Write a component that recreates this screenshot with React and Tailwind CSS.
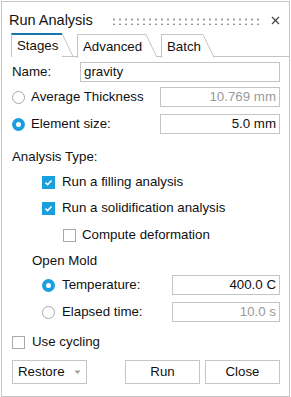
import React from "react";

const Radio = ({ on }) =>
  on ? (
    <span className="w-[13px] h-[13px] rounded-full bg-[#1a9fde] flex items-center justify-center shrink-0">
      <span className="w-[5px] h-[5px] rounded-full bg-white" />
    </span>
  ) : (
    <span className="w-[13px] h-[13px] rounded-full border border-[#a8a8a8] bg-white shrink-0" />
  );

const Check = ({ on }) =>
  on ? (
    <span className="w-[13px] h-[13px] bg-[#1a9fde] flex items-center justify-center shrink-0">
      <svg width="9" height="9" viewBox="0 0 9 9">
        <path d="M1.5 4.6 L3.6 6.6 L7.5 2.4" fill="none" stroke="white" strokeWidth="1.5" />
      </svg>
    </span>
  ) : (
    <span className="w-[13px] h-[13px] border border-[#a8a8a8] bg-white shrink-0" />
  );

const Field = ({ w, value, muted, left }) => (
  <div
    className={`h-[20px] border border-[#c4c4c4] bg-white flex items-center px-[3px] ${w} ${
      left ? "justify-start" : "justify-end"
    } ${muted ? "text-[#9a9a9a]" : "text-[#111]"}`}
  >
    {value}
  </div>
);

const Tab = ({ label, w, active }) => (
  <div className={`flex h-[24px] ${active ? "relative z-10" : ""}`}>
    <div
      className={`h-full pl-[5px] flex items-center bg-white ${w} ${
        active ? "border-l border-[#c4c4c4] border-t-2 border-t-[#1478a8]" : "border-l border-t border-[#c4c4c4] mt-px"
      }`}
    >
      {label}
    </div>
    <svg width="11" height="24" viewBox="0 0 11 24" className={active ? "" : "mt-px"}>
      <polygon points="0,0 11,23 0,23" fill="white" />
      <line x1="0" y1="0.5" x2="11" y2="23.5" stroke="#c4c4c4" strokeWidth="1" />
    </svg>
  </div>
);

export default function App() {
  return (
    <div className="w-[291px] h-[397px] bg-white pt-px pl-px font-['Liberation_Sans',Arial,sans-serif] text-[13.3px] text-[#111] leading-none">
      <div className="w-[289px] h-[396px] border border-[#c6c6c6] flex flex-col">
        <div className="h-[31px] pt-[6px] pl-[7px] pr-[9px] flex items-center">
          <span className="text-[14.5px]">Run Analysis</span>
          <div className="ml-[18px] w-[152px] h-[8px] bg-[radial-gradient(circle,#9a9a9a_1px,transparent_1.2px)] bg-[length:6px_5px]" />
          <svg width="9" height="9" viewBox="0 0 9 9" className="ml-auto">
            <path d="M1 1 L8 8 M8 1 L1 8" stroke="#444" strokeWidth="1.2" />
          </svg>
        </div>

        <div className="ml-[9px] h-[24px] border-b border-[#c4c4c4] flex gap-[4px]">
          <Tab label="Stages" w="w-[51px]" active />
          <Tab label="Advanced" w="w-[69px]" />
          <Tab label="Batch" w="w-[42px]" />
        </div>

        <div className="pl-[10px] pr-[9px] flex flex-col">
          <div className="mt-[5px] h-[20px] flex items-center">
            <span>Name:</span>
            <div className="ml-auto">
              <Field w="w-[200px]" value="gravity" left />
            </div>
          </div>
          <div className="mt-[5px] h-[20px] flex items-center">
            <Radio />
            <span className="ml-[6px]">Average Thickness</span>
            <div className="ml-auto">
              <Field w="w-[120px]" value="10.769 mm" muted />
            </div>
          </div>
          <div className="mt-[7px] h-[20px] flex items-center">
            <Radio on />
            <span className="ml-[6px]">Element size:</span>
            <div className="ml-auto">
              <Field w="w-[120px]" value="5.0 mm" />
            </div>
          </div>

          <div className="mt-[13px] h-[20px] flex items-center">Analysis Type:</div>
          <div className="mt-[5px] h-[20px] flex items-center pl-[30px]">
            <Check on />
            <span className="ml-[7px]">Run a filling analysis</span>
          </div>
          <div className="mt-[6px] h-[20px] flex items-center pl-[30px]">
            <Check on />
            <span className="ml-[7px]">Run a solidification analysis</span>
          </div>
          <div className="mt-[7px] h-[20px] flex items-center pl-[51px]">
            <Check />
            <span className="ml-[6px]">Compute deformation</span>
          </div>

          <div className="mt-[6px] h-[20px] flex items-center pl-[20px]">Open Mold</div>
          <div className="mt-[4px] h-[20px] flex items-center pl-[30px]">
            <Radio on />
            <span className="ml-[7px]">Temperature:</span>
            <div className="ml-auto">
              <Field w="w-[108px]" value="400.0 C" />
            </div>
          </div>
          <div className="mt-[7px] h-[20px] flex items-center pl-[30px]">
            <Radio />
            <span className="ml-[7px]">Elapsed time:</span>
            <div className="ml-auto">
              <Field w="w-[108px]" value="10.0 s" muted />
            </div>
          </div>

          <div className="mt-[10px] h-[20px] flex items-center">
            <Check />
            <span className="ml-[7px]">Use cycling</span>
          </div>

          <div className="mt-[8px] h-[24px] flex items-center">
            <button className="w-[75px] h-full border border-[#c6c6c6] bg-white flex items-center pl-[5px] text-[13.3px]">
              Restore
              <svg width="7" height="5" viewBox="0 0 7 5" className="ml-[9px]">
                <path d="M0.5 0.5 L3.5 4 L6.5 0.5 Z" fill="#a0a0a0" />
              </svg>
            </button>
            <button className="ml-auto w-[75px] h-full border border-[#c6c6c6] bg-white flex items-center justify-center text-[13.3px]">
              Run
            </button>
            <button className="ml-[5px] w-[75px] h-full border border-[#c6c6c6] bg-white flex items-center justify-center text-[13.3px]">
              Close
            </button>
          </div>
        </div>
      </div>
    </div>
  );
}
